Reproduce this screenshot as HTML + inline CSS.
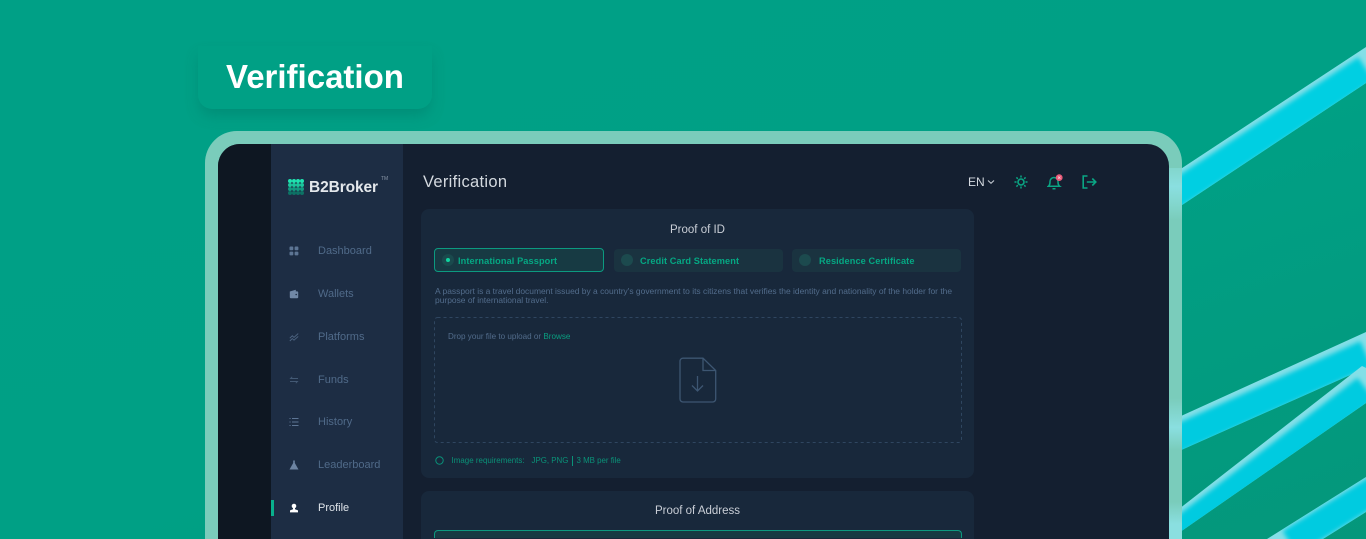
<!DOCTYPE html>
<html lang="en">
<head>
<meta charset="utf-8">
<title>Verification</title>
<style>
html,body{margin:0;padding:0;width:1366px;height:539px;overflow:hidden;background:#00a085}
#w{position:relative;width:1366px;height:539px;overflow:hidden;background:linear-gradient(160deg,#00a086 0%,#00a085 55%,#04977b 100%);font-family:"Liberation Sans",sans-serif}
.a{position:absolute;white-space:nowrap}
.badge{left:198px;top:46px;width:234px;height:63px;border-radius:0 0 14px 14px;background:#00a085;box-shadow:0 8px 14px -2px rgba(0,110,95,.38)}
.title{left:226px;top:57px;font-size:33px;line-height:40px;color:#fff;font-weight:700}
.frame{left:205px;top:131px;width:977px;height:408px;background:#7accbb;border-radius:32px 32px 0 0}
.screen{left:218px;top:144px;width:951px;height:395px;background:#141f30;border-radius:22px 22px 0 0;overflow:hidden}
.dark{left:0;top:0;width:53px;height:395px;background:#0e1722}
.side{left:53px;top:0;width:132px;height:395px;background:#1d2d44}
.nav{left:318px;font-size:11px;line-height:14px;color:#506a89}
.panel{left:421px;width:553px;background:#18283b;border-radius:8px}
.tab{top:249px;height:23px;background:#1a3340;border-radius:4px}
.tabt{top:255px;font-size:9.2px;line-height:12px;color:#05a883;font-weight:700;letter-spacing:.1px}
.dot{top:254px;width:12px;height:12px;border-radius:50%;background:#1c4a4e}
.small{font-size:8.45px;line-height:10px;color:#526c8b}
svg{position:absolute;overflow:hidden;display:block}
</style>
</head>
<body>
<div id="w">
<svg style="left:0;top:0" width="1366" height="539" viewBox="0 0 1366 539">
<defs>
<filter id="b" x="-20%" y="-60%" width="140%" height="220%"><feGaussianBlur stdDeviation="2.500"/></filter>
<clipPath id="c1"><polygon points="1170,176 1366,47 1366,83 1170,213"/></clipPath>
<clipPath id="c2"><polygon points="1170,421 1366,332 1366,368 1170,455"/></clipPath>
<clipPath id="c3"><polygon points="1170,516 1362,366 1366,368 1366,403 1170,539"/></clipPath>
<clipPath id="c4"><polygon points="1267,539 1366,477 1366,512 1323,539"/></clipPath>
</defs>
<g clip-path="url(#c1)"><rect x="1170" y="40" width="196" height="180" fill="#84dfe7"/><line x1="1170" y1="198" x2="1366" y2="69" stroke="#04cfe2" stroke-width="28" filter="url(#b)"/></g>
<g clip-path="url(#c2)"><rect x="1170" y="320" width="196" height="140" fill="#84dfe7"/><line x1="1170" y1="442" x2="1366" y2="354" stroke="#04cbe0" stroke-width="28" filter="url(#b)"/></g>
<g clip-path="url(#c3)"><rect x="1170" y="360" width="196" height="179" fill="#84dfe7"/><line x1="1170" y1="539" x2="1366" y2="389" stroke="#04cbe0" stroke-width="28" filter="url(#b)"/></g>
<g clip-path="url(#c4)"><rect x="1260" y="470" width="106" height="69" fill="#84dfe7"/><line x1="1290" y1="543" x2="1380" y2="487" stroke="#04cbe0" stroke-width="28" filter="url(#b)"/></g>
</svg>

<div class="a badge"></div>
<div class="a title">Verification</div>

<div class="a frame"></div>
<div class="a" style="left:1169px;top:168px;width:13px;height:371px;background:linear-gradient(180deg,#82d6cc 0,#8adfe0 5%,#82d6cc 10%,#7accbb 14%,#7accbb 62%,#8adfe0 70%,#7accbb 76%,#7accbb 90%,#8adfe0 96%,#8adfe0 100%)"></div>
<div class="a screen">
  <div class="a dark"></div>
  <div class="a side"></div>
</div>

<svg style="left:288px;top:179px" width="16" height="16" viewBox="0 0 16 16">
<g fill="#1fe3b0"><circle cx="2" cy="2" r="2"/><circle cx="6" cy="2" r="2"/><circle cx="10" cy="2" r="2"/><circle cx="14" cy="2" r="2"/></g>
<g fill="#1bc69c"><circle cx="2" cy="6" r="2"/><circle cx="6" cy="6" r="2"/><circle cx="10" cy="6" r="2"/><circle cx="14" cy="6" r="2"/></g>
<g fill="#129a80"><circle cx="2" cy="10" r="2"/><circle cx="6" cy="10" r="2"/><circle cx="10" cy="10" r="2"/><circle cx="14" cy="10" r="2"/></g>
<g fill="#0d7165"><circle cx="2" cy="14" r="2"/><circle cx="6" cy="14" r="2"/><circle cx="10" cy="14" r="2"/><circle cx="14" cy="14" r="2"/></g>
</svg>
<div class="a" style="left:309px;top:179px;font-size:15.5px;line-height:18px;color:#e4e8ec;font-weight:700;letter-spacing:-.1px">B2Broker</div>
<div class="a" style="left:381px;top:176px;font-size:5px;line-height:7px;color:#8895a6">TM</div>

<div class="a nav" style="top:244px">Dashboard</div>
<div class="a nav" style="top:287px">Wallets</div>
<div class="a nav" style="top:330px">Platforms</div>
<div class="a nav" style="top:373px">Funds</div>
<div class="a nav" style="top:415px">History</div>
<div class="a nav" style="top:458px">Leaderboard</div>
<div class="a nav" style="top:501px;color:#dfe4ea">Profile</div>
<div class="a" style="left:271px;top:500px;width:3px;height:16px;background:#09b08d"></div>

<svg style="left:289px;top:246px" width="10" height="10" viewBox="0 0 10 10"><g fill="#5d7594"><rect x="0.500" y="0.500" width="3.800" height="3.800" rx="1"/><rect x="5.600" y="0.500" width="3.800" height="3.800" rx="1"/><rect x="0.500" y="5.600" width="3.800" height="3.800" rx="1"/><rect x="5.600" y="5.600" width="3.800" height="3.800" rx="1"/></g></svg>
<svg style="left:289px;top:289px" width="10" height="10" viewBox="0 0 10 10"><path d="M.8 2.500 6.800.8V2.400H8.200A1 1 0 0 1 9.200 3.400V8.200A1 1 0 0 1 8.200 9.200H1.800A1 1 0 0 1 .8 8.200Z" fill="#7188a6"/><circle cx="7.200" cy="5.500" r=".8" fill="#1d2d44"/></svg>
<svg style="left:289px;top:332px" width="10" height="10" viewBox="0 0 10 10"><path d="M.8 6.200 3.300 3.800 5 5.400 9.200 1.600M.8 9 3.300 6.600 5 8.200 9.200 4.400" fill="none" stroke="#4f6684" stroke-width=".9"/></svg>
<svg style="left:289px;top:375px" width="10" height="10" viewBox="0 0 10 10"><path d="M9 3.500H1.500L3.200 1.800M1 6.500H8.500L6.800 8.200" fill="none" stroke="#435974" stroke-width=".9"/></svg>
<svg style="left:289px;top:417px" width="10" height="10" viewBox="0 0 10 10"><path d="M3 1.500H9.500M3 5H9.500M3 8.500H9.500M.5 1.500H1.600M.5 5H1.600M.5 8.500H1.600" fill="none" stroke="#5d7594" stroke-width="1"/></svg>
<svg style="left:289px;top:460px" width="10" height="10" viewBox="0 0 10 10"><path d="M4.200.5H5.800V3L9.500 9.500H.5L4.200 3Z" fill="#6d84a2"/></svg>
<svg style="left:289px;top:503px" width="10" height="10" viewBox="0 0 10 10"><circle cx="5" cy="3" r="2.300" fill="#fff"/><path d="M4 4.500H6V6.300L9 7.400V9.400H1V7.400L4 6.300Z" fill="#fff"/></svg>

<div class="a" style="left:423px;top:172px;font-size:16.500px;line-height:20px;color:#d4d9df;letter-spacing:.3px">Verification</div>
<div class="a" style="left:968px;top:175px;font-size:12px;line-height:14px;color:#d4d9df">EN</div>
<svg style="left:987px;top:179px" width="8" height="6" viewBox="0 0 8 6"><path d="M1 1.500 4 4.300 7 1.500" fill="none" stroke="#c4cad2" stroke-width="1.100"/></svg>
<svg style="left:1014px;top:175px" width="14" height="14" viewBox="0 0 14 14"><circle cx="7" cy="7" r="3" fill="none" stroke="#0aa684" stroke-width="1.600"/><path d="M7 .5V2.500M7 11.500V13.500M.5 7H2.500M11.500 7H13.500M2.400 2.400 3.800 3.800M10.200 10.200 11.600 11.600M2.400 11.600 3.800 10.200M10.200 3.800 11.600 2.400" stroke="#0aa684" stroke-width="1.500"/></svg>
<svg style="left:1047px;top:174px" width="16" height="16" viewBox="0 0 16 16"><path d="M1.300 12.300C3 11 3 9.500 3 7.500A4 4 0 0 1 11 7.500C11 9.500 11 11 12.700 12.300ZM5.500 14.700H8.500" fill="none" stroke="#0aa684" stroke-width="1.500"/><circle cx="12.200" cy="3.600" r="3.400" fill="#e95a78"/><path d="M11 2.500 13.400 4.800M13.400 2.500 11 4.800" stroke="#f7d5dd" stroke-width=".7"/></svg>
<svg style="left:1082px;top:175px" width="15" height="14" viewBox="0 0 15 14"><path d="M5.500 1H1.200V13H5.500M4.800 7H13.800M10.300 3.500 13.800 7 10.300 10.500" fill="none" stroke="#0aa684" stroke-width="1.600"/></svg>

<div class="a panel" style="top:209px;height:269px"></div>
<div class="a panel" style="top:491px;height:48px;border-radius:8px 8px 0 0"></div>

<div class="a" style="left:421px;width:553px;top:223px;text-align:center;font-size:11.500px;line-height:15px;color:#c9ced6">Proof of ID</div>

<div class="a tab" style="left:434px;top:248px;width:168px;height:22px;border:1.500px solid #0c9a80;background:#173a43"></div>
<div class="a" style="left:442px;top:254px;width:12px;height:12px;border-radius:50%;background:#1a4a4d"></div>
<div class="a" style="left:446px;top:258px;width:4px;height:4px;border-radius:50%;background:#0fd49f"></div>
<div class="a tabt" style="left:458px">International Passport</div>

<div class="a tab" style="left:614px;width:169px"></div>
<div class="a dot" style="left:621px"></div>
<div class="a tabt" style="left:640px">Credit Card Statement</div>

<div class="a tab" style="left:792px;width:169px"></div>
<div class="a dot" style="left:799px"></div>
<div class="a tabt" style="left:819px">Residence Certificate</div>

<div class="a small" style="left:435px;top:286px">A passport is a travel document issued by a country's government to its citizens that verifies the identity and nationality of the holder for the</div>
<div class="a small" style="left:435px;top:295px">purpose of international travel.</div>

<svg style="left:434px;top:317px" width="528" height="126" viewBox="0 0 528 126"><rect x=".5" y=".5" width="527" height="125" rx="3" fill="none" stroke="#2f4660" stroke-width="1" stroke-dasharray="3 3"/></svg>
<div class="a small" style="left:448px;top:332px;font-size:8.100px">Drop your file to upload or <span style="color:#0a9e80">Browse</span></div>

<svg style="left:679px;top:357px" width="38" height="46" viewBox="0 0 38 46"><path d="M4 1.200H24L36.700 13.500V42A3 3 0 0 1 33.700 45H4A3 3 0 0 1 1 42V4.200A3 3 0 0 1 4 1.200ZM24 1.200V13.500H36.700" fill="none" stroke="#3d5672" stroke-width="1.300"/><path d="M18.500 19V34M13 28.500 18.500 34 24 28.500" fill="none" stroke="#3d5672" stroke-width="1.300"/></svg>

<svg style="left:435px;top:456px" width="9" height="9" viewBox="0 0 9 9"><circle cx="4.500" cy="4.500" r="3.700" fill="none" stroke="#0a8f78" stroke-width="1"/></svg>
<div class="a small" style="left:451.500px;top:456px;font-size:7.900px;letter-spacing:.04px;color:#0a9278">Image requirements:</div>
<div class="a small" style="left:531.500px;top:456px;font-size:7.900px;color:#0a9278">JPG, PNG</div>
<div class="a" style="left:571.500px;top:456px;width:1px;height:10px;background:#0a9278"></div>
<div class="a small" style="left:576.500px;top:456px;font-size:7.900px;color:#0a9278">3 MB per file</div>

<div class="a" style="left:421px;width:553px;top:504px;text-align:center;font-size:11.500px;line-height:15px;color:#c9ced6">Proof of Address</div>
<div class="a" style="left:434px;top:530px;width:526px;height:7px;border:1.500px solid #0c9a80;border-bottom:0;border-radius:4px 4px 0 0;background:#173a43"></div>
</div>
</body>
</html>
